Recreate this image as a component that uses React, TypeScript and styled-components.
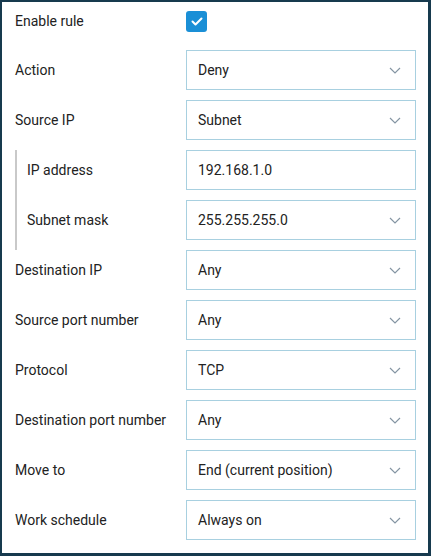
import type { FC } from 'react';
import styled, { createGlobalStyle } from 'styled-components';

const GlobalStyle = createGlobalStyle`
  * {
    margin: 0;
    padding: 0;
    box-sizing: border-box;
  }

  body {
    font-family: Roboto, 'Liberation Sans', sans-serif;
    font-size: 14px;
    color: #222;
    background: #fff;
  }
`;

const Frame = styled.div`
  width: 431px;
  height: 556px;
  border-style: solid;
  border-color: #173a4e;
  border-width: 2px 3px 3px 2px;
  background: #fff;
  padding: 0 12px 0 13px;
  display: flex;
  flex-direction: column;
  gap: 10px;
`;

const Row = styled.div<{ $tall?: boolean }>`
  display: flex;
  align-items: center;
  height: ${(p) => (p.$tall ? 38 : 40)}px;
`;

const Label = styled.div`
  flex: 1;
  color: #222;
  white-space: nowrap;
`;

const Group = styled.div`
  display: flex;
  flex-direction: column;
  gap: 10px;
  border-left: 2px solid #c9c9c9;
  padding-left: 10px;
  padding-bottom: 10px;
  margin-bottom: -10px;
`;

const Field = styled.div`
  width: 230px;
  height: 40px;
  border: 1px solid #a8d0e0;
  background: #fff;
  display: flex;
  align-items: center;
  padding: 0 14px 0 11px;
  color: #222;
`;

const Value = styled.span`
  flex: 1;
`;

const Check = styled.div`
  width: 21px;
  height: 21px;
  border-radius: 3px;
  background: #1a8fd6;
  display: flex;
  align-items: center;
  justify-content: center;
`;

const Chevron: FC = () => (
  <svg width="12" height="7" viewBox="0 0 12 7">
    <path d="M1 1l5 5 5-5" fill="none" stroke="#8595a3" strokeWidth="1.2" />
  </svg>
);

const Select: FC<{ value: string }> = ({ value }) => (
  <Field>
    <Value>{value}</Value>
    <Chevron />
  </Field>
);

const App: FC = () => {
  return (
    <>
      <GlobalStyle />
      <Frame>
        <Row $tall>
          <Label>Enable rule</Label>
          <div style={{ width: 230 }}>
            <Check>
              <svg width="12" height="9" viewBox="0 0 12 9">
                <path d="M1.5 4.5l3 3 6-6" fill="none" stroke="#fff" strokeWidth="2" strokeLinecap="round" strokeLinejoin="round" />
              </svg>
            </Check>
          </div>
        </Row>
        <Row>
          <Label>Action</Label>
          <Select value="Deny" />
        </Row>
        <Row>
          <Label>Source IP</Label>
          <Select value="Subnet" />
        </Row>
        <Group>
          <Row>
            <Label>IP address</Label>
            <Field>
              <Value>192.168.1.0</Value>
            </Field>
          </Row>
          <Row>
            <Label>Subnet mask</Label>
            <Select value="255.255.255.0" />
          </Row>
        </Group>
        <Row>
          <Label>Destination IP</Label>
          <Select value="Any" />
        </Row>
        <Row>
          <Label>Source port number</Label>
          <Select value="Any" />
        </Row>
        <Row>
          <Label>Protocol</Label>
          <Select value="TCP" />
        </Row>
        <Row>
          <Label>Destination port number</Label>
          <Select value="Any" />
        </Row>
        <Row>
          <Label>Move to</Label>
          <Select value="End (current position)" />
        </Row>
        <Row>
          <Label>Work schedule</Label>
          <Select value="Always on" />
        </Row>
      </Frame>
    </>
  );
};

export default App;
